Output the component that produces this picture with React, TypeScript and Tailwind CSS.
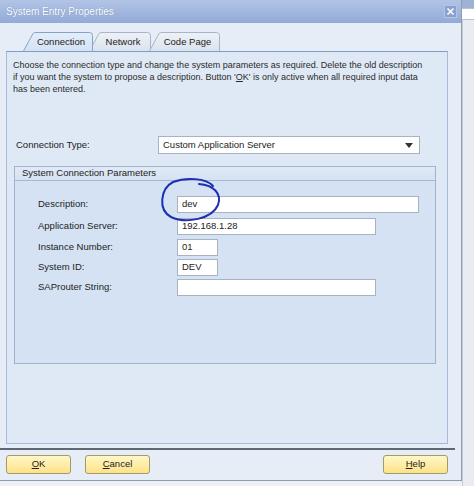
import React from "react"

const font = { fontFamily: '"Liberation Sans", "DejaVu Sans", sans-serif' }

function Tab({
  label,
  width,
  active,
  className,
}: {
  label: string
  width: number
  active?: boolean
  className?: string
}) {
  const w = width
  const d = `M0.5 19 L10 1.5 Q11 0.5 13 0.5 L${w - 3.5} 0.5 Q${w - 0.5} 0.5 ${w - 0.5} 3.5 L${w - 0.5} 19`
  const id = active ? "tabActive" : "tabIdle"
  return (
    <div className={`relative h-[19px] ${className ?? ""}`} style={{ width: w }}>
      <svg className="absolute inset-0" width={w} height={19}>
        <defs>
          <linearGradient id={id} x1="0" y1="0" x2="0" y2="1">
            <stop offset="0" stopColor={active ? "#e4eefa" : "#eef2f7"} />
            <stop offset="1" stopColor={active ? "#d3e2f4" : "#dbe3ed"} />
          </linearGradient>
        </defs>
        <path d={d} fill={`url(#${id})`} stroke={active ? "#86a2c9" : "#a6b5c8"} />
      </svg>
      <span className="relative flex h-full items-center justify-center pl-[6px] pt-[1px] text-[9.5px] text-[#222]">
        {label}
      </span>
    </div>
  )
}

function Field({ value, width }: { value?: string; width: number }) {
  return (
    <div
      className="flex h-[17px] items-center border border-[#a9b3bf] bg-white px-[4px] text-[9.5px] text-[#222]"
      style={{ width }}
    >
      {value}
    </div>
  )
}

function Row({ label, children, top }: { label: string; children: React.ReactNode; top: string }) {
  return (
    <div className={`flex items-center ${top}`}>
      <span className="w-[162px] pl-[23px] text-[9.5px] text-[#222]">{label}</span>
      {children}
    </div>
  )
}

function YellowButton({ first, rest, className }: { first: string; rest: string; className?: string }) {
  return (
    <button
      className={`flex h-[19px] w-[65px] items-center justify-center rounded-[3px] border border-[#a39a6c] bg-gradient-to-b from-[#fff7c6] to-[#fde287] text-[9.5px] text-[#222] ${className ?? ""}`}
    >
      <span className="underline underline-offset-1">{first}</span>
      {rest}
    </button>
  )
}

export default function App() {
  return (
    <div className="flex h-[486px] w-[474px] bg-[#eef0f3]" style={font}>
      {/* dialog */}
      <div className="flex h-[481px] w-[462px] flex-col border-r border-b border-[#8e9cb2] bg-[#e6edf7]">
        {/* title bar */}
        <div className="flex h-[23px] items-center justify-between bg-gradient-to-b from-[#b2c4e6] to-[#93aad7] pl-[6px] pr-[4px]">
          <span className="text-[10px] text-white [text-shadow:0_0_1px_#6c82b0]">System Entry Properties</span>
          <div className="flex h-[13px] w-[13px] items-center justify-center border border-[#b4c4e2] bg-[#8aa1cd]">
            <svg width="9" height="9" viewBox="0 0 9 9">
              <path d="M1.5 1.5 L7.5 7.5 M7.5 1.5 L1.5 7.5" stroke="#ffffff" strokeWidth="1.6" />
            </svg>
          </div>
        </div>

        {/* tabs */}
        <div className="mt-[9px] flex pl-[23px]">
          <Tab label="Connection" width={70} active className="z-10" />
          <Tab label="Network" width={62} className="ml-[-4px]" />
          <Tab label="Code Page" width={71} className="ml-[-2px]" />
        </div>

        {/* tab panel */}
        <div className="relative z-0 mx-[6px] mr-[13px] flex h-[393px] flex-col border border-[#a8bbd6] border-t-[#7f9dc8] bg-[#dfe9f5]">
          <p className="whitespace-nowrap pl-[6px] pt-[7px] text-[9px] leading-[12px] text-[#2a2a2a]">
            Choose the connection type and change the system parameters as required. Delete the old description
            <br />
            if you want the system to propose a description. Button '<span className="underline">O</span>K' is only
            active when all required input data
            <br />
            has been entered.
          </p>

          <div className="mt-[41px] flex items-center">
            <span className="w-[151px] pl-[9px] text-[9.5px] text-[#222]">Connection Type:</span>
            <div className="flex h-[18px] w-[262px] items-center justify-between border border-[#a9b3bf] bg-white pl-[4px] pr-[6px] text-[9.5px] text-[#222]">
              Custom Application Server
              <svg width="8" height="5" viewBox="0 0 8 5">
                <path d="M0 0 L8 0 L4 5 Z" fill="#333" />
              </svg>
            </div>
          </div>

          {/* group box */}
          <div className="mt-[12px] ml-[7px] mr-[11px] flex h-[198px] flex-col border border-[#9fb3cf] bg-[#d4e2f4]">
            <div className="flex h-[14px] items-center border-b border-[#a6b9d3] bg-gradient-to-b from-[#e1eaf5] to-[#d6e2f1] pl-[7px] text-[9.5px] text-[#222]">
              System Connection Parameters
            </div>
            <div className="relative flex flex-col">
              <Row label="Description:" top="mt-[15px]">
                <Field value="dev" width={242} />
              </Row>
              <Row label="Application Server:" top="mt-[5px]">
                <Field value="192.168.1.28" width={199} />
              </Row>
              <Row label="Instance Number:" top="mt-[4px]">
                <Field value="01" width={41} />
              </Row>
              <Row label="System ID:" top="mt-[3px]">
                <Field value="DEV" width={41} />
              </Row>
              <Row label="SAProuter String:" top="mt-[3px]">
                <Field width={199} />
              </Row>
              {/* hand-drawn circle annotation */}
              <svg className="absolute left-[132px] top-[-17px]" width="80" height="64" viewBox="147 163 80 64">
                <path
                  d="M213 185 C206 177 186 176 173 181 C160 188 158 209 171 216 C186 223 212 218 218 204 C222 193 214 184 199 183"
                  fill="none"
                  stroke="#1d2fb2"
                  strokeWidth="2"
                  strokeLinecap="round"
                />
              </svg>
            </div>
          </div>
        </div>

        {/* separator */}
        <div className="mt-[4px] mr-[6px] h-[2px] bg-[#5d6874]" />

        {/* buttons */}
        <div className="mt-[5px] flex pl-[6px]">
          <YellowButton first="O" rest="K" />
          <YellowButton first="C" rest="ancel" className="ml-[14px]" />
          <YellowButton first="H" rest="elp" className="ml-auto mr-[13px]" />
        </div>
      </div>

      {/* background window strip */}
      <div className="flex flex-1 flex-col">
        <div className="h-[8px] bg-[#9fb2d6]" />
        <div className="h-[12px] border-y border-[#b9c3d0] bg-white" />
        <div className="flex-1 border-l border-[#c5ccd6] bg-[#e9edf2]" />
      </div>
    </div>
  )
}
